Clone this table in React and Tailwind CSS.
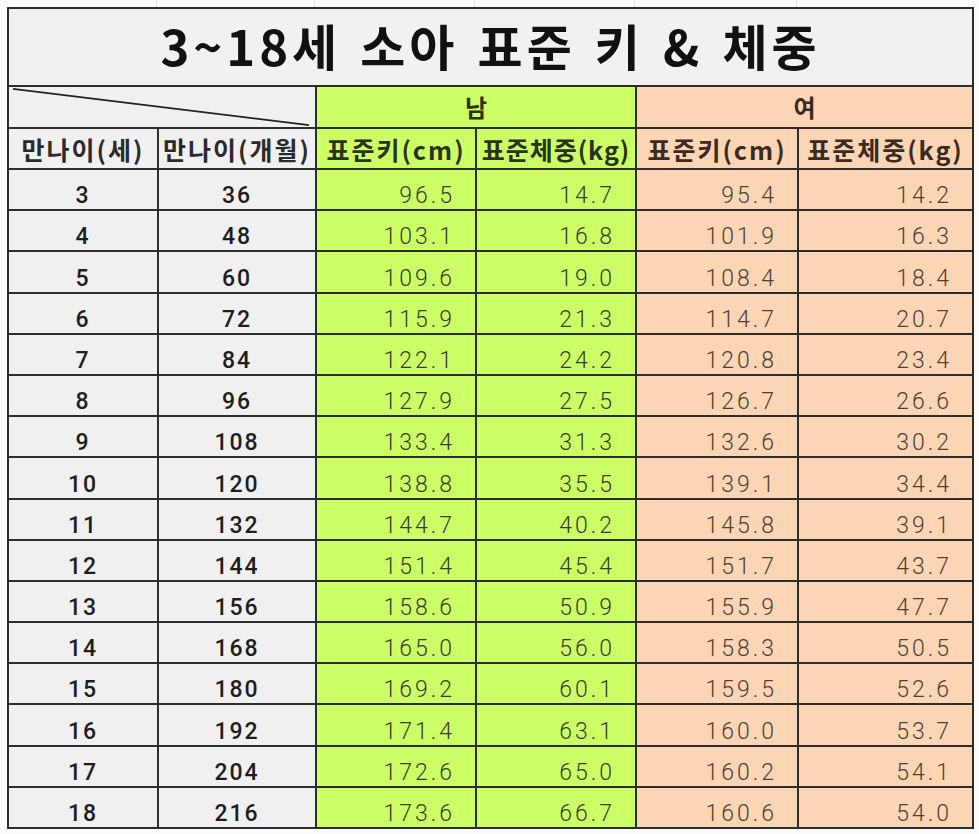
const rows = [
  [3, 36, '96.5', '14.7', '95.4', '14.2'],
  [4, 48, '103.1', '16.8', '101.9', '16.3'],
  [5, 60, '109.6', '19.0', '108.4', '18.4'],
  [6, 72, '115.9', '21.3', '114.7', '20.7'],
  [7, 84, '122.1', '24.2', '120.8', '23.4'],
  [8, 96, '127.9', '27.5', '126.7', '26.6'],
  [9, 108, '133.4', '31.3', '132.6', '30.2'],
  [10, 120, '138.8', '35.5', '139.1', '34.4'],
  [11, 132, '144.7', '40.2', '145.8', '39.1'],
  [12, 144, '151.4', '45.4', '151.7', '43.7'],
  [13, 156, '158.6', '50.9', '155.9', '47.7'],
  [14, 168, '165.0', '56.0', '158.3', '50.5'],
  [15, 180, '169.2', '60.1', '159.5', '52.6'],
  [16, 192, '171.4', '63.1', '160.0', '53.7'],
  [17, 204, '172.6', '65.0', '160.2', '54.1'],
  [18, 216, '173.6', '66.7', '160.6', '54.0'],
]

const kr = "font-['Noto_Sans_CJK_KR','Noto_Sans',sans-serif]"
const num = "font-['Roboto','Liberation_Sans',sans-serif]"
const cell = 'border-2 border-[#2d2d2d]'
const dataCell = `${cell} p-0 pb-[1px] align-bottom ${num} text-[23px] leading-[24px]`

export default function App() {
  return (
    <div className="min-h-screen w-[979px] bg-[#fbfbfb]">
      <div className="flex h-[7px] pl-[8px]">
        <div className="w-[149px] border-r border-[#e2e2e2]" />
        <div className="w-[158px] border-r border-[#e2e2e2]" />
        <div className="w-[160px] border-r border-[#e2e2e2]" />
        <div className="w-[160px] border-r border-[#e2e2e2]" />
        <div className="w-[162px] border-r border-[#e2e2e2]" />
      </div>
      <div className="pl-[7px]">
        <table className="w-[965px] table-fixed border-collapse">
          <colgroup>
            <col className="w-[150px]" />
            <col className="w-[158px]" />
            <col className="w-[160px]" />
            <col className="w-[160px]" />
            <col className="w-[162px]" />
            <col className="w-[175px]" />
          </colgroup>
          <tbody>
            <tr className="h-[78px]">
              <td colSpan={6} className={`${cell} bg-[#f1f1f1] p-0 pb-[4px] text-center ${kr} text-[49px] leading-[60px] font-bold tracking-[4px] text-[#111] [word-spacing:4px]`}>
                3~18세 소아 표준 키 &amp; 체중
              </td>
            </tr>
            <tr className="h-[42px]">
              <td colSpan={2} className={`${cell} relative bg-[#f0f0f0] p-0`}>
                <svg className="absolute inset-0 h-full w-full" viewBox="0 0 308 42" preserveAspectRatio="none">
                  <line x1="4" y1="2" x2="302" y2="40" stroke="#222" strokeWidth="2" />
                </svg>
              </td>
              <td colSpan={2} className={`${cell} bg-[#ccff66] p-0 text-center ${kr} text-[24px] leading-[30px] font-bold text-[#2b3320]`}>
                남
              </td>
              <td colSpan={2} className={`${cell} bg-[#fcd5b4] p-0 text-center ${kr} text-[24px] leading-[30px] font-bold text-[#3a2a22]`}>
                여
              </td>
            </tr>
            <tr className={`h-[41px] ${kr} text-[25px] leading-[30px] font-bold tracking-[2px]`}>
              <td className={`${cell} bg-[#f0f0f0] p-0 text-center text-[#2a2a2a] whitespace-nowrap`}>만나이(세)</td>
              <td className={`${cell} bg-[#f0f0f0] p-0 text-center text-[#2a2a2a] whitespace-nowrap`}>만나이(개월)</td>
              <td className={`${cell} bg-[#ccff66] p-0 text-center text-[#2b3320] whitespace-nowrap`}>표준키(cm)</td>
              <td className={`${cell} bg-[#ccff66] p-0 text-center text-[#2b3320] whitespace-nowrap tracking-[1px]`}>표준체중(kg)</td>
              <td className={`${cell} bg-[#fcd5b4] p-0 text-center text-[#3a2a22] whitespace-nowrap`}>표준키(cm)</td>
              <td className={`${cell} bg-[#fcd5b4] p-0 text-center text-[#3a2a22] whitespace-nowrap`}>표준체중(kg)</td>
            </tr>
            {rows.map((r) => (
              <tr key={r[0]} className="h-[41.2px]">
                <td className={`${dataCell} bg-[#f0f0f0] text-center font-medium tracking-[2px] text-[#1e1e1e]`}>{r[0]}</td>
                <td className={`${dataCell} bg-[#f0f0f0] text-center font-medium tracking-[2px] text-[#1e1e1e]`}>{r[1]}</td>
                <td className={`${dataCell} bg-[#ccff66] pr-[20px] text-right font-light tracking-[3px] text-[#34402a]`}>{r[2]}</td>
                <td className={`${dataCell} bg-[#ccff66] pr-[20px] text-right font-light tracking-[3px] text-[#34402a]`}>{r[3]}</td>
                <td className={`${dataCell} bg-[#fcd5b4] pr-[20px] text-right font-light tracking-[3px] text-[#4e3f37]`}>{r[4]}</td>
                <td className={`${dataCell} bg-[#fcd5b4] pr-[20px] text-right font-light tracking-[3px] text-[#4e3f37]`}>{r[5]}</td>
              </tr>
            ))}
          </tbody>
        </table>
      </div>
    </div>
  )
}
